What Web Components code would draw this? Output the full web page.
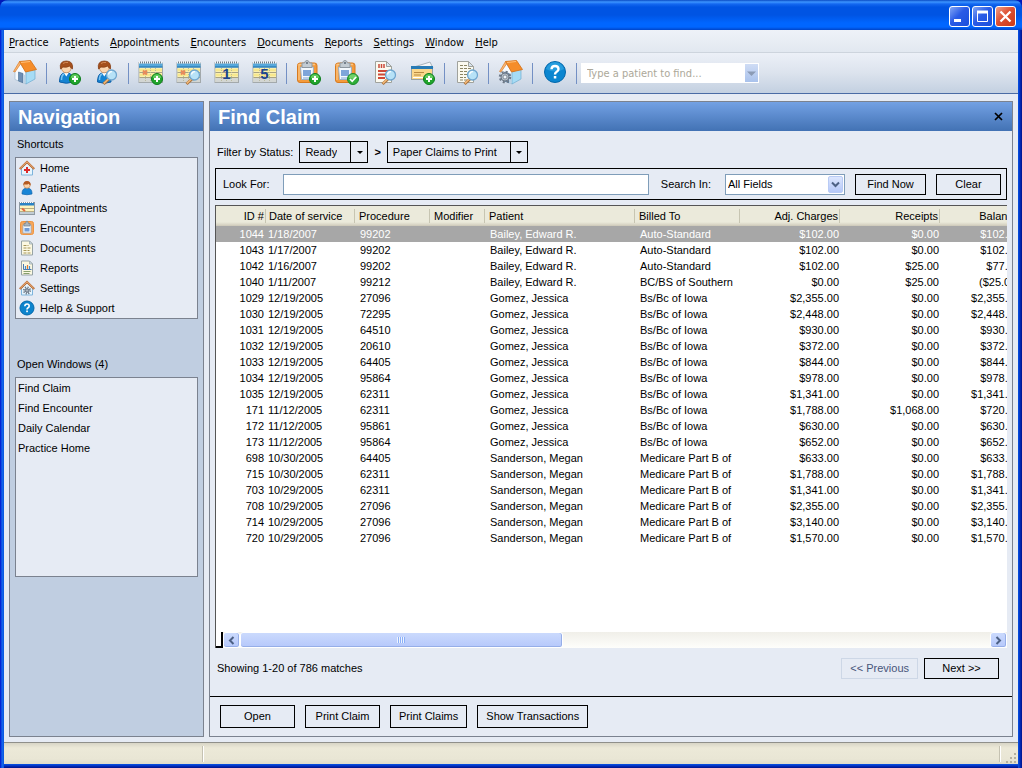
<!DOCTYPE html>
<html lang="en">
<head>
<meta charset="utf-8">
<meta name="viewport" content="width=device-width, initial-scale=1">
<title>Find Claim</title>
<style>
  html, body {
    margin: 0;
    height: 100%;
    background: #0019b8;
  }

  body {
    font: 11px/13px "Liberation Sans", Arial, sans-serif;
    color: #000;
  }
</style>
</head>
<body>

<app-window>
  <title-bar slot="title"></title-bar>
  <menu-bar slot="menu"></menu-bar>
  <tool-bar slot="tools"></tool-bar>

  <app-panel heading="Navigation" class="nav" slot="side">
    <nav-list label="Shortcuts" kind="shortcuts"></nav-list>
    <nav-list label="Open Windows (4)" kind="windows"></nav-list>
  </app-panel>

  <app-panel heading="Find Claim" closable>
    <find-claim></find-claim>
  </app-panel>

  <status-bar slot="status"></status-bar>
</app-window>

<script>
function render(host, html) {
  const template = document.createElement("template");
  template.innerHTML = html;
  host.attachShadow({ mode: "open" });
  host.shadowRoot.appendChild(template.content.cloneNode(true));
}

/* ---------- icons ---------- */

const plusBadge = `
  <circle cx="19" cy="19" r="5.5" fill="#21a52c" stroke="#0d7d1c"/>
  <path d="M14.6 17.5a4.6 4.6 0 0 1 8.8 0q-4.4 2.5-8.8 0z" fill="#7fdb74" opacity=".7"/>
  <path d="M19 16v6M16 19h6" stroke="#fff" stroke-width="2"/>`;

const checkBadge = `
  <circle cx="19" cy="19" r="5.5" fill="#2fae38" stroke="#1a8a27"/>
  <path d="M14.6 17.5a4.6 4.6 0 0 1 8.8 0q-4.4 2.5-8.8 0z" fill="#8be07f" opacity=".7"/>
  <path d="M16 19l2.2 2.3 3.9-4.3" fill="none" stroke="#fff" stroke-width="1.8"/>`;

const lens = `
  <path d="M16 19L10.500 24" stroke="#a8703a" stroke-width="3"/>
  <path d="M16 18.500L10.800 23.300" stroke="#f1b878" stroke-width="1.600"/>
  <circle cx="18.500" cy="15" r="5" fill="#b7e2f7" stroke="#6fa6cf" stroke-width="1.300"/>
  <path d="M15.500 14.500a3.400 3.400 0 0 1 3.400-2.800" fill="none" stroke="#fff" stroke-width="1.300"/>`;

const person = `
  <path d="M3.500 22q0-8 4.500-9h4.500q4.500 1 4.500 9-6.500 2.500-13.500 0z" fill="#1583d2" stroke="#0d5fa8"/>
  <path d="M5.500 20q0-5 2.500-6" fill="none" stroke="#7cc4f2" stroke-width="1.500"/>
  <path d="M8 13l2.300 3.500L12.600 13z" fill="#fff"/>
  <circle cx="10.300" cy="8" r="4.800" fill="#fbd6b0" stroke="#c98b58" stroke-width=".8"/>
  <path d="M4.500 9Q3 1 10.300 1t6.200 8q-2-1-2.800-3-3 2-7 1-.700 1.500-2.200 2z" fill="#a5501d" stroke="#823a10" stroke-width=".7"/>
  <path d="M7 3.500q2-1.500 5-1" fill="none" stroke="#d28a56"/>`;

const calendar = `
  <rect x="1" y="2.500" width="23.500" height="20" fill="#fdf7cf" stroke="#a3a9ab"/>
  <rect x="1" y="3" width="23.500" height="4.500" fill="#56a8db"/>
  <path d="M1 7h23.500" stroke="#1a6ead"/>
  <path d="M1 2.500h23.500" stroke="#f4f7f8" stroke-width="2"/>
  <path d="M2 2.500h22" stroke="#6c7d88" stroke-width="2" stroke-dasharray="1 1"/>
  <path d="M1.500 10h22.500M1.500 15h22.500" stroke="#f7e88d" stroke-width="3"/>
  <path d="M1.500 12.500h22.500M1.500 17.500h22.500" stroke="#a9a381"/>
  <rect x="1.500" y="18" width="22.500" height="4" fill="#d3d6d3"/>
  <path d="M7.500 8v14M12.500 8v14M17.500 8v14" stroke="#b9b99f" stroke-dasharray="1 1"/>`;

const redMark = `<path d="M5 10.500l4 4m0-4l-4 4" stroke="#ea8a5a" stroke-width="2"/>`;

const clipboard = `
  <rect x="1.500" y="3" width="19.500" height="19.500" rx="2.500" fill="#f49a3b" stroke="#d67a20"/>
  <path d="M3 20V4.500h16" fill="none" stroke="#fcc583" stroke-width="1.300"/>
  <path d="M4.500 7h13l-.500 12.500H5.500z" fill="#f3f8fd" stroke="#9ab0c7"/>
  <path d="M6 3h2.500q.500-2.500 2.500-2.500t2.500 2.500H16v4.500H6z" fill="#c3ccd3" stroke="#8d979f"/>
  <circle cx="11" cy="3" r="1" fill="#5d6974"/>
  <rect x="7" y="10" width="8" height="6" fill="#7ea5da"/>
  <path d="M7 18h8" stroke="#7ea5da"/>`;

const page = (stroke) => `
  <path d="M3.500 1.500h11l5 5v16h-16z" fill="#fbfaf0" stroke="#a0a29c"/>
  <path d="M14.500 1.500v5h5z" fill="#d7e4f0" stroke="#a0a29c"/>
  ${stroke}`;

const bigHouse = `
  <path d="M3 10.500l5-7 6 8v12.500L3 19.500z" fill="#f7fbff" stroke="#9fb9cf" stroke-width=".7"/>
  <path d="M14 11.500l9-3v10.500l-9 5z" fill="#a6dcf5" stroke="#6facd0" stroke-width=".7"/>
  <path d="M6.500 12l4.500 1.500v9.300L6.500 21z" fill="#6d8fb5" stroke="#47698e" stroke-width=".6"/>
  <path d="M11 22.800V14l2 1v8.500z" fill="#bdd2e4"/>
  <path d="M7.500 1.500L18.500 .500l6 9L13.500 12z" fill="#f58d2a" stroke="#d66e12" stroke-width=".8"/>
  <path d="M9 2.500l9-1" stroke="#ffc07a"/>
  <path d="M7.500 1.500L1.500 11.500l1.500.500L8.500 4z" fill="#fbb876" stroke="#d66e12" stroke-width=".6"/>`;

const gear = (cx, cy, r, hole) => `
  <g transform="translate(${cx} ${cy})">
    <circle r="${r}" fill="none" stroke="#6d7987" stroke-width="2.500" stroke-dasharray="${r * 0.393} ${r * 0.393}"/>
    <circle r="${r - 1}" fill="#b5c0ca" stroke="#6d7987"/>
    <circle r="${hole}" fill="#eef3f8" stroke="#6d7987" stroke-width=".8"/>
  </g>`;

const smallHouse = `
  <path d="M2.500 8.500v6.500h11V8.500L8 3z" fill="#e8f5fd" stroke="#7db4dc"/>
  <path d="M.8 9L8 2l7.200 7" fill="none" stroke="#b96b32" stroke-width="2.200"/>
  <path d="M1.300 8.300L8 1.800l6.700 6.500" fill="none" stroke="#f0b27e" stroke-width="1"/>`;

const icons = {
  "home": [26, bigHouse],
  "patient-add": [26, person + plusBadge],
  "patient-find": [26, person + `<g transform="translate(-1 0)">${lens}</g>`],
  "calendar-add": [26, calendar + redMark + plusBadge],
  "calendar-find": [26, calendar + redMark + lens],
  "calendar-day": [26, calendar + `<text x="12.5" y="19" class="digit">1</text>`],
  "calendar-week": [26, calendar + `<text x="12.5" y="19" class="digit">5</text>`],
  "encounter-add": [26, clipboard + plusBadge],
  "encounter-check": [26, clipboard + checkBadge],
  "report-find": [26, page(`
    <path d="M7 4v4M9.500 4v4M12 4v4" stroke="#cb4a39" stroke-width="1.500"/>
    <path d="M6 11h11M6 14.500h8M6 18h7" stroke="#cf4936" stroke-width="2"/>`) + lens],
  "card-add": [26, `
    <path d="M4 7l16-5 3 6-17 5z" fill="#f3f5f7" stroke="#a9b4bc"/>
    <rect x="1.500" y="6.500" width="21" height="13" fill="#fbd78b" stroke="#98a2a4"/>
    <rect x="1" y="6" width="22" height="3" fill="#287bb5"/>
    <path d="M4 12.500h10M4 15h7" stroke="#b98a42"/>
    <path d="M3 17.500h10" stroke="#fff"/>` + plusBadge],
  "document-find": [26, page(`
    <path d="M6 5.500h7M6 8.500h11M6 11.500h8M6 14.500h7M6 17.500h6M6 20h8" stroke="#8b8564" stroke-dasharray="3 1"/>`) + lens],
  "settings": [26, bigHouse + gear(7, 17, 5, 2)],
  "help": [26, `
    <circle cx="13" cy="12" r="10.500" fill="#0b86d0" stroke="#0468ab"/>
    <path d="M4 9a9.300 9.300 0 0 1 18 0q-9 5-18 0z" fill="#3fb1ea" opacity=".5"/>
    <path d="M9.500 9.300Q9.700 6 13 6t3.500 3q0 1.700-1.800 2.700T13 14.500" fill="none" stroke="#fff" stroke-width="2.400"/>
    <rect x="11.800" y="16" width="2.500" height="2.500" fill="#fff"/>`],

  "s-home": [16, smallHouse + `<path d="M8 7v6M5 10h6" stroke="#dc2a2a" stroke-width="2"/>`],
  "s-patients": [16, `
    <path d="M3 14q0-5 3-5.500h4q3 .5 3 5.500-5 1.500-10 0z" fill="#1885d6" stroke="#0d64ae" stroke-width=".7"/>
    <circle cx="8" cy="5" r="3.200" fill="#fbd3aa" stroke="#c98b58" stroke-width=".7"/>
    <path d="M4.300 5.500Q4 1 8 1t3.700 4.500Q10 5 9.800 3.700 7.500 5 5.500 4.300z" fill="#b35a22"/>`],
  "s-appointments": [16, `
    <rect x=".5" y="2.500" width="15" height="12" fill="#fdf3bc" stroke="#8f9aa3"/>
    <rect x="1" y="3" width="14" height="2.500" fill="#2b83c6"/>
    <path d="M1 2.500h14" stroke="#fff" stroke-dasharray="1 1"/>
    <path d="M1 8.500h14M1 11.500h14" stroke="#b9ae83"/>
    <path d="M3 8.500l3 2.500" stroke="#e5673d" stroke-width="2"/>
    <path d="M1 13h14" stroke="#c2cdd5" stroke-width="2"/>`],
  "s-encounters": [16, `
    <rect x="1.500" y="1.500" width="13" height="13" rx="2" fill="#f6a75c" stroke="#ee9440"/>
    <rect x="4" y="5" width="8" height="8" fill="#eef5fc" stroke="#8fa9c7" stroke-width=".7"/>
    <path d="M5 3.500h1.500Q7 1 8 1t1.500 2.500H11V6H5z" fill="#a8b4be" stroke="#77838d" stroke-width=".7"/>
    <rect x="5.500" y="8" width="5" height="3.500" fill="#6f9bd8"/>`],
  "s-documents": [16, `
    <path d="M2.500 1h8l3 3v11h-11z" fill="#fbf8e2" stroke="#97a3a5"/>
    <path d="M10.500 1v3h3z" fill="#d7e4f0" stroke="#97a3a5" stroke-width=".7"/>
    <path d="M4.500 5.500h5M4.500 8h7M4.500 10.500h6M4.500 13h7" stroke="#a79658" stroke-dasharray="3 1"/>`],
  "s-reports": [16, `
    <path d="M2.500 1h8l3 3v11h-11z" fill="#fbf8e2" stroke="#97a3a5"/>
    <path d="M10.500 1v3h3z" fill="#d7e4f0" stroke="#97a3a5" stroke-width=".7"/>
    <path d="M4.500 4v5.500h8" fill="none" stroke="#4a79b4"/>
    <path d="M6.500 6v3M10.500 6v3" stroke="#3c8fce" stroke-width="1.200"/>
    <path d="M8.500 5v4" stroke="#e07a30" stroke-width="1.200"/>
    <path d="M4.500 11.500h7M4.500 13.500h6" stroke="#88a06c"/>`],
  "s-settings": [16, smallHouse + gear(8, 10.5, 2.8, 1)],
  "s-help": [16, `
    <circle cx="8" cy="8" r="7" fill="#0d84cd" stroke="#0468ab"/>
    <path d="M5.800 6.300Q5.900 4 8 4t2.200 2q0 1.100-1.100 1.700T8 9.500" fill="none" stroke="#fff" stroke-width="1.600"/>
    <rect x="7.200" y="10.500" width="1.700" height="1.700" fill="#fff"/>`],

  "minimize": [21, `<rect x="5" y="13" width="7" height="3" fill="#fff"/>`],
  "maximize": [21, `<path d="M5.500 6v9.500h10V6z" fill="none" stroke="#fff"/><path d="M5 6h11" stroke="#fff" stroke-width="3"/>`],
  "close": [21, `<path d="M5.500 5.500l10 10m0-10l-10 10" stroke="#fff" stroke-width="2.300"/>`],
  "panel-close": [9, `<path d="M1 1l7 7m0-7L1 8" stroke="#000" stroke-width="1.700"/>`],
  "caret": [9, `<path d="M2 3h6L5 6z" fill="#000"/>`],
  "chevron-down": [9, `<path d="M1 2.500l3.500 3.500L8 2.500" fill="none" stroke="#4d6185" stroke-width="2"/>`],
  "chevron-left": [9, `<path d="M6.500 1L3 4.500 6.500 8" fill="none" stroke="#4d6185" stroke-width="2"/>`],
  "chevron-right": [9, `<path d="M2.500 1L6 4.500 2.500 8" fill="none" stroke="#4d6185" stroke-width="2"/>`],
  "caret-wide": [9, `<path d="M0 2.500h9L4.500 7z" fill="#8b9bb5"/>`]
};

class AppIcon extends HTMLElement {
  constructor() {
    super();
    const [size, shapes] = icons[this.getAttribute("name")];
    render(this, `
      <style>
        :host { display: block; width: ${size}px; height: ${size}px; }
        svg { display: block; }
        .digit { font: bold 15px "Liberation Sans", Arial, sans-serif; fill: #1c4690; text-anchor: middle; }
      </style>
      <svg width="${size}" height="${size}" viewBox="0 0 ${size} ${size}" aria-hidden="true">${shapes}</svg>
    `);
  }
}

/* ---------- window frame ---------- */

class AppWindow extends HTMLElement {
  constructor() {
    super();
    render(this, `
      <style>
        :host {
          display: flex;
          flex-direction: column;
          box-sizing: border-box;
          min-height: 100vh;
          padding: 0 4px 4px;
          border-radius: 8px 8px 0 0;
          background:
            linear-gradient(to right, #0019cf, #0831d9 1px, #166aee 2px, #0855dd 4px),
            linear-gradient(to left, #00138c, #001ea0 1px, #0441d8 3px, #0855dd 4px),
            linear-gradient(#0855dd, #0441d8 1px, #001ea0 3px, #00138c);
          background-size: 4px 100%, 4px 100%, 100% 4px;
          background-position: left, right, bottom;
          background-repeat: no-repeat;
        }
        main {
          flex: 1;
          display: flex;
          gap: 5px;
          padding: 7px 5px 5px;
          background: #e6ebf4;
        }
        ::slotted(app-panel) { flex: 1; min-width: 0; }
        ::slotted(.nav) { flex: 0 0 195px; }
      </style>
      <slot name="title"></slot>
      <slot name="menu"></slot>
      <slot name="tools"></slot>
      <main><slot name="side"></slot><slot></slot></main>
      <slot name="status"></slot>
    `);
  }
}

class TitleBar extends HTMLElement {
  constructor() {
    super();
    render(this, `
      <style>
        :host {
          display: flex;
          justify-content: flex-end;
          align-items: center;
          gap: 2px;
          box-sizing: border-box;
          height: 30px;
          margin: 0 -4px;
          padding: 3px 6px 0;
          border-radius: 8px 8px 0 0;
          background: linear-gradient(#0a4bc4, #3d95ff 2px, #1468f0 4px, #0054e3 7px, #0054e3 15px, #0066ff 23px, #0066ff 27px, #0044c8);
        }
        button {
          width: 21px;
          height: 21px;
          padding: 0;
          border: 1px solid #fff;
          border-radius: 3px;
          background: linear-gradient(135deg, #83a6f5, #2a5be6 45%, #1a4fdc);
        }
        button app-icon { margin: -1px; }
        .close { background: linear-gradient(135deg, #f0a088, #dd5033 45%, #cc3a17); }
      </style>
      <button aria-label="Minimize"><app-icon name="minimize"></app-icon></button>
      <button aria-label="Maximize"><app-icon name="maximize"></app-icon></button>
      <button class="close" aria-label="Close"><app-icon name="close"></app-icon></button>
    `);
  }
}

class MenuBar extends HTMLElement {
  constructor() {
    super();
    render(this, `
      <style>
        :host {
          display: block;
          padding: 6px 0 3px;
          border-bottom: 1px solid #cdd4dd;
          background: linear-gradient(#eef2f8, #e2e8f0);
          font: 11px/13px "DejaVu Sans Condensed", Tahoma, sans-serif;
        }
        nav { display: flex; gap: 1px; }
        a { padding: 0 5px; color: #000; text-decoration: none; }
      </style>
      <nav>
        <a href="#"><u>P</u>ractice</a>
        <a href="#">Pa<u>t</u>ients</a>
        <a href="#"><u>A</u>ppointments</a>
        <a href="#"><u>E</u>ncounters</a>
        <a href="#"><u>D</u>ocuments</a>
        <a href="#"><u>R</u>eports</a>
        <a href="#"><u>S</u>ettings</a>
        <a href="#"><u>W</u>indow</a>
        <a href="#"><u>H</u>elp</a>
      </nav>
    `);
  }
}

const tools = [
  ["home"],
  ["patient-add", "patient-find"],
  ["calendar-add", "calendar-find", "calendar-day", "calendar-week"],
  ["encounter-add", "encounter-check", "report-find", "card-add"],
  ["document-find"],
  ["settings"],
  ["help"]
];

class ToolBar extends HTMLElement {
  constructor() {
    super();
    const groups = tools.map((names) =>
      names.map((name) => `<button aria-label="${name}"><app-icon name="${name}"></app-icon></button>`).join("") + "<hr>"
    ).join("");
    render(this, `
      <style>
        :host {
          display: flex;
          align-items: center;
          box-sizing: border-box;
          height: 41px;
          padding: 0 2px;
          border-bottom: 1px solid #4a6ba5;
          background: linear-gradient(#ecf0f7, #dce3ed 50%, #c3d0e1);
        }
        button {
          display: flex;
          justify-content: center;
          width: 38px;
          padding: 0;
          border: 0;
          background: none;
        }
        hr {
          width: 1px;
          height: 21px;
          margin: 0 3px 0 2px;
          border: 0;
          background: #7390c4;
        }
        .finder {
          display: flex;
          box-sizing: border-box;
          width: 178px;
          height: 20px;
          margin-left: 1px;
          padding: 1px;
          background: #fff;
        }
        input {
          flex: 1;
          min-width: 0;
          padding: 0 5px;
          border: 0;
          background: none;
          font: 11px/13px "DejaVu Sans Condensed", Tahoma, sans-serif;
        }
        input::placeholder { color: #aca899; }
        .finder button {
          align-items: center;
          width: 13px;
          background: linear-gradient(#cfdcf5, #a9c2ec);
        }
      </style>
      ${groups}
      <div class="finder">
        <input type="text" placeholder="Type a patient to find..." aria-label="Find patient">
        <button aria-label="Show patients"><app-icon name="caret-wide"></app-icon></button>
      </div>
    `);
  }
}

class StatusBar extends HTMLElement {
  constructor() {
    super();
    render(this, `
      <style>
        :host {
          display: flex;
          justify-content: flex-end;
          box-sizing: border-box;
          height: 22px;
          border-top: 1px solid #8f8f8a;
          background: linear-gradient(#d8d5c6, #ece9d8 5px, #e9e6d5 16px, #dfdccb);
        }
        span {
          margin: 3px 0 2px;
          border-right: 1px solid #fff;
          box-shadow: inset -1px 0 #c5c2b2;
        }
        .first { width: 199px; }
        .rest { flex: 1; }
        svg { align-self: flex-end; margin-left: 3px; }
      </style>
      <span class="first"></span>
      <span class="rest"></span>
      <svg width="14" height="14" viewBox="0 0 14 14" aria-hidden="true">
        <path d="M10 3h2v2h-2zM6 7h2v2H6zM10 7h2v2h-2zM2 11h2v2H2zM6 11h2v2H6zM10 11h2v2h-2z" fill="#b3b09e"/>
      </svg>
    `);
  }
}

/* ---------- panels ---------- */

class AppPanel extends HTMLElement {
  constructor() {
    super();
    const close = this.hasAttribute("closable")
      ? `<button aria-label="Close panel"><app-icon name="panel-close"></app-icon></button>`
      : "";
    render(this, `
      <style>
        :host {
          display: flex;
          flex-direction: column;
          box-sizing: border-box;
          border: 1px solid #7b828f;
          background: #e6ebf4;
        }
        :host(.nav) { background: #c0cee1; }
        header {
          display: flex;
          justify-content: space-between;
          align-items: center;
          height: 29px;
          padding: 0 9px 0 8px;
          background: linear-gradient(#73a1e4, #4272b4);
        }
        h1 {
          margin: 0;
          color: #fff;
          font: bold 20px/24px "Liberation Sans", Arial, sans-serif;
        }
        button { padding: 0; border: 0; background: none; }
      </style>
      <header><h1>${this.getAttribute("heading")}</h1>${close}</header>
      <slot></slot>
    `);
  }
}

const lists = {
  shortcuts: [
    ["Home", "s-home"],
    ["Patients", "s-patients"],
    ["Appointments", "s-appointments"],
    ["Encounters", "s-encounters"],
    ["Documents", "s-documents"],
    ["Reports", "s-reports"],
    ["Settings", "s-settings"],
    ["Help &amp; Support", "s-help"]
  ],
  windows: [["Find Claim"], ["Find Encounter"], ["Daily Calendar"], ["Practice Home"]]
};

class NavList extends HTMLElement {
  constructor() {
    super();
    const items = lists[this.getAttribute("kind")].map(([text, icon]) => `
      <li><a href="#">${icon ? `<app-icon name="${icon}"></app-icon>` : ""}${text}</a></li>`
    ).join("");
    render(this, `
      <style>
        :host { display: block; padding: 7px 5px 0; }
        :host([kind="windows"]) { padding-top: 39px; }
        h2 { margin: 0 0 6px 2px; font: inherit; }
        ul {
          margin: 0;
          padding: 0;
          border: 1px solid #7b828f;
          background: #e6ebf4;
          list-style: none;
        }
        :host([kind="windows"]) ul { min-height: 198px; }
        a {
          display: flex;
          align-items: center;
          gap: 5px;
          height: 20px;
          padding: 0 3px;
          color: #000;
          text-decoration: none;
        }
        :host([kind="windows"]) a { padding: 0 2px; }
      </style>
      <h2>${this.getAttribute("label")}</h2>
      <ul>${items}</ul>
    `);
  }
}

/* ---------- controls ---------- */

class FlatButton extends HTMLElement {
  constructor() {
    super();
    render(this, `
      <style>
        :host { display: block; }
        button {
          box-sizing: border-box;
          width: 100%;
          min-width: 75px;
          height: 23px;
          padding: 0 8px;
          border: 1px solid #000;
          background: #e6ebf4;
          color: #000;
          font: inherit;
          white-space: nowrap;
        }
        :host([size="small"]) button { min-width: 65px; height: 21px; }
        button:disabled { border-color: #cdd7e6; color: #46557a; }
      </style>
      <button ${this.hasAttribute("disabled") ? "disabled" : ""}><slot></slot></button>
    `);
  }
}

// The arrow shares the select's grid cell and lets clicks through.
class DropDown extends HTMLElement {
  constructor() {
    super();
    const field = this.getAttribute("look") === "field";
    render(this, `
      <style>
        :host { display: inline-grid; }
        select, .arrow { grid-area: 1 / 1; box-sizing: border-box; }
        select {
          height: 22px;
          padding: 0 30px 0 5px;
          border: 1px solid #000;
          border-radius: 0;
          background: #e6ebf4;
          color: #000;
          font: inherit;
          appearance: none;
        }
        .arrow {
          display: grid;
          place-items: center;
          justify-self: end;
          width: 18px;
          border: 1px solid #000;
          pointer-events: none;
        }
        :host([look="field"]) select {
          height: 21px;
          padding: 0 20px 0 2px;
          border-color: #7f9db9;
          background: #fff;
        }
        :host([look="field"]) .arrow {
          width: 15px;
          margin: 2px;
          border: 1px solid #b9cbf5;
          border-radius: 2px;
          background: linear-gradient(#dce6fe, #b5c8f8);
        }
      </style>
      <select aria-label="${this.getAttribute("label")}"><option>${this.getAttribute("value")}</option></select>
      <span class="arrow"><app-icon name="${field ? "chevron-down" : "caret"}"></app-icon></span>
    `);
  }
}

/* ---------- claims ---------- */

const claims = [
  ["1044", "1/18/2007", "99202", "Bailey, Edward R.", "Auto-Standard", "$102.00", "$0.00", "$102.00"],
  ["1043", "1/17/2007", "99202", "Bailey, Edward R.", "Auto-Standard", "$102.00", "$0.00", "$102.00"],
  ["1042", "1/16/2007", "99202", "Bailey, Edward R.", "Auto-Standard", "$102.00", "$25.00", "$77.00"],
  ["1040", "1/11/2007", "99212", "Bailey, Edward R.", "BC/BS of Southern", "$0.00", "$25.00", "($25.00)"],
  ["1029", "12/19/2005", "27096", "Gomez, Jessica", "Bs/Bc of Iowa", "$2,355.00", "$0.00", "$2,355.00"],
  ["1030", "12/19/2005", "72295", "Gomez, Jessica", "Bs/Bc of Iowa", "$2,448.00", "$0.00", "$2,448.00"],
  ["1031", "12/19/2005", "64510", "Gomez, Jessica", "Bs/Bc of Iowa", "$930.00", "$0.00", "$930.00"],
  ["1032", "12/19/2005", "20610", "Gomez, Jessica", "Bs/Bc of Iowa", "$372.00", "$0.00", "$372.00"],
  ["1033", "12/19/2005", "64405", "Gomez, Jessica", "Bs/Bc of Iowa", "$844.00", "$0.00", "$844.00"],
  ["1034", "12/19/2005", "95864", "Gomez, Jessica", "Bs/Bc of Iowa", "$978.00", "$0.00", "$978.00"],
  ["1035", "12/19/2005", "62311", "Gomez, Jessica", "Bs/Bc of Iowa", "$1,341.00", "$0.00", "$1,341.00"],
  ["171", "11/12/2005", "62311", "Gomez, Jessica", "Bs/Bc of Iowa", "$1,788.00", "$1,068.00", "$720.00"],
  ["172", "11/12/2005", "95861", "Gomez, Jessica", "Bs/Bc of Iowa", "$630.00", "$0.00", "$630.00"],
  ["173", "11/12/2005", "95864", "Gomez, Jessica", "Bs/Bc of Iowa", "$652.00", "$0.00", "$652.00"],
  ["698", "10/30/2005", "64405", "Sanderson, Megan", "Medicare Part B of", "$633.00", "$0.00", "$633.00"],
  ["715", "10/30/2005", "62311", "Sanderson, Megan", "Medicare Part B of", "$1,788.00", "$0.00", "$1,788.00"],
  ["703", "10/29/2005", "62311", "Sanderson, Megan", "Medicare Part B of", "$1,341.00", "$0.00", "$1,341.00"],
  ["708", "10/29/2005", "27096", "Sanderson, Megan", "Medicare Part B of", "$2,355.00", "$0.00", "$2,355.00"],
  ["714", "10/29/2005", "27096", "Sanderson, Megan", "Medicare Part B of", "$3,140.00", "$0.00", "$3,140.00"],
  ["720", "10/29/2005", "27096", "Sanderson, Megan", "Medicare Part B of", "$1,570.00", "$0.00", "$1,570.00"]
];

const columns = [
  ["ID #", 50, "num"],
  ["Date of service", 89, ""],
  ["Procedure", 75, ""],
  ["Modifier", 55, ""],
  ["Patient", 150, ""],
  ["Billed To", 105, ""],
  ["Adj. Charges", 100, "num"],
  ["Receipts", 100, "num"],
  ["Balance", 81, "num"]
];

class ClaimTable extends HTMLElement {
  constructor() {
    super();
    const cols = columns.map(([, width]) => `<col style="width: ${width}px">`).join("");
    const heads = columns.map(([name, , type]) => `<th scope="col" class="${type}">${name}</th>`).join("");
    const rows = claims.map(([id, date, code, patient, payer, charges, receipts, balance], i) => `
      <tr class="${i === 0 ? "selected" : ""}">
        <td class="num">${id}</td><td class="date">${date}</td><td>${code}</td><td></td>
        <td>${patient}</td><td>${payer}</td>
        <td class="num">${charges}</td><td class="num">${receipts}</td><td class="num">${balance}</td>
      </tr>`
    ).join("");
    render(this, `
      <style>
        :host {
          display: flex;
          flex-direction: column;
          border-top: 1px solid #555;
          border-left: 1px solid #555;
          background: #fff;
        }
        .view { flex: 1; overflow: hidden; }
        table {
          width: 805px;
          min-width: 100%;
          border-collapse: collapse;
          table-layout: fixed;
        }
        th, td {
          height: 16px;
          padding: 0 0 0 5px;
          font-weight: normal;
          line-height: 16px;
          text-align: left;
          white-space: nowrap;
        }
        th {
          height: 20px;
          padding-left: 4px;
          background:
            linear-gradient(#c7c5b2, #c7c5b2) right center / 1px 14px no-repeat,
            linear-gradient(#ebeadb 16px, #d6d2c2 19px, #cbc7b8);
        }
        .num { padding: 0 1px 0 0; text-align: right; }
        th.num { padding-right: 2px; }
        td.date { padding-left: 2px; }
        td.num:first-child { padding-right: 2px; }
        th:nth-child(2) { padding-left: 3px; }
        .selected { background: #a7a7a7; color: #fff; }
        .scroll {
          display: flex;
          height: 16px;
          background: linear-gradient(#f0efe9, #fefefb);
        }
        .corner {
          width: 5px;
          border-right: 2px solid #000;
          border-bottom: 2px solid #000;
          background: #fff;
        }
        .track { flex: 1; }
        .scroll button, .thumb {
          display: grid;
          place-items: center;
          box-sizing: border-box;
          height: 16px;
          border: 1px solid #fff;
          border-radius: 3px;
          background: linear-gradient(#cbdafd, #b6c8fb);
          box-shadow: inset 0 -1px #96aee8, inset -1px 0 #96aee8;
        }
        .scroll button { width: 17px; padding: 0; }
        .thumb { width: 43%; }
        .grip {
          width: 8px;
          height: 6px;
          background: repeating-linear-gradient(to right, #eef4fe 0 1px, #8cb0f8 1px 2px);
        }
      </style>
      <div class="view">
        <table>
          <colgroup>${cols}</colgroup>
          <thead><tr>${heads}</tr></thead>
          <tbody>${rows}</tbody>
        </table>
      </div>
      <div class="scroll">
        <div class="corner"></div>
        <button aria-label="Scroll left"><app-icon name="chevron-left"></app-icon></button>
        <div class="track"><div class="thumb"><div class="grip"></div></div></div>
        <button aria-label="Scroll right"><app-icon name="chevron-right"></app-icon></button>
      </div>
    `);
  }
}

class FindClaim extends HTMLElement {
  constructor() {
    super();
    render(this, `
      <style>
        :host { flex: 1; display: flex; flex-direction: column; }
        .body {
          flex: 1;
          display: flex;
          flex-direction: column;
          gap: 5px;
          padding: 10px 5px 0;
        }
        .filter { display: flex; align-items: center; padding-left: 2px; }
        .filter span { margin-right: 6px; }
        .filter b { margin: 0 6px; }
        .search {
          display: flex;
          align-items: center;
          gap: 10px;
          padding: 5px 5px 4px 7px;
          border: 1px solid #000;
        }
        .search label { margin-right: 4px; }
        .search input {
          flex: 1;
          min-width: 0;
          box-sizing: border-box;
          height: 21px;
          border: 1px solid #7f9db9;
          background: #fff;
          font: inherit;
        }
        .search span { margin: 0 4px 0 2px; }
        .search drop-down { width: 120px; }
        .find { width: 71px; }
        claim-table { flex: 1; }
        .pager {
          display: flex;
          align-items: center;
          gap: 6px;
          padding: 5px 8px 17px 2px;
        }
        .pager p { flex: 1; margin: 0; }
        .next { width: 75px; }
        .actions {
          display: flex;
          gap: 10px;
          padding: 8px 10px;
          border-top: 1px solid #000;
        }
      </style>
      <div class="body">
        <div class="filter">
          <span>Filter by Status:</span>
          <drop-down label="Status" value="Ready"></drop-down>
          <b>&gt;</b>
          <drop-down label="Claim type" value="Paper Claims to Print"></drop-down>
        </div>
        <div class="search">
          <label for="look">Look For:</label>
          <input id="look" type="text">
          <span>Search In:</span>
          <drop-down look="field" label="Search In" value="All Fields"></drop-down>
          <flat-button size="small" class="find">Find Now</flat-button>
          <flat-button size="small">Clear</flat-button>
        </div>
        <claim-table></claim-table>
        <div class="pager">
          <p>Showing 1-20 of 786 matches</p>
          <flat-button size="small" disabled>&lt;&lt; Previous</flat-button>
          <flat-button size="small" class="next">Next &gt;&gt;</flat-button>
        </div>
      </div>
      <div class="actions">
        <flat-button>Open</flat-button>
        <flat-button>Print Claim</flat-button>
        <flat-button>Print Claims</flat-button>
        <flat-button>Show Transactions</flat-button>
      </div>
    `);
  }
}

window.customElements.define("app-icon", AppIcon);
window.customElements.define("title-bar", TitleBar);
window.customElements.define("menu-bar", MenuBar);
window.customElements.define("tool-bar", ToolBar);
window.customElements.define("status-bar", StatusBar);
window.customElements.define("flat-button", FlatButton);
window.customElements.define("drop-down", DropDown);
window.customElements.define("nav-list", NavList);
window.customElements.define("claim-table", ClaimTable);
window.customElements.define("find-claim", FindClaim);
window.customElements.define("app-panel", AppPanel);
window.customElements.define("app-window", AppWindow);
</script>
</body>
</html>
